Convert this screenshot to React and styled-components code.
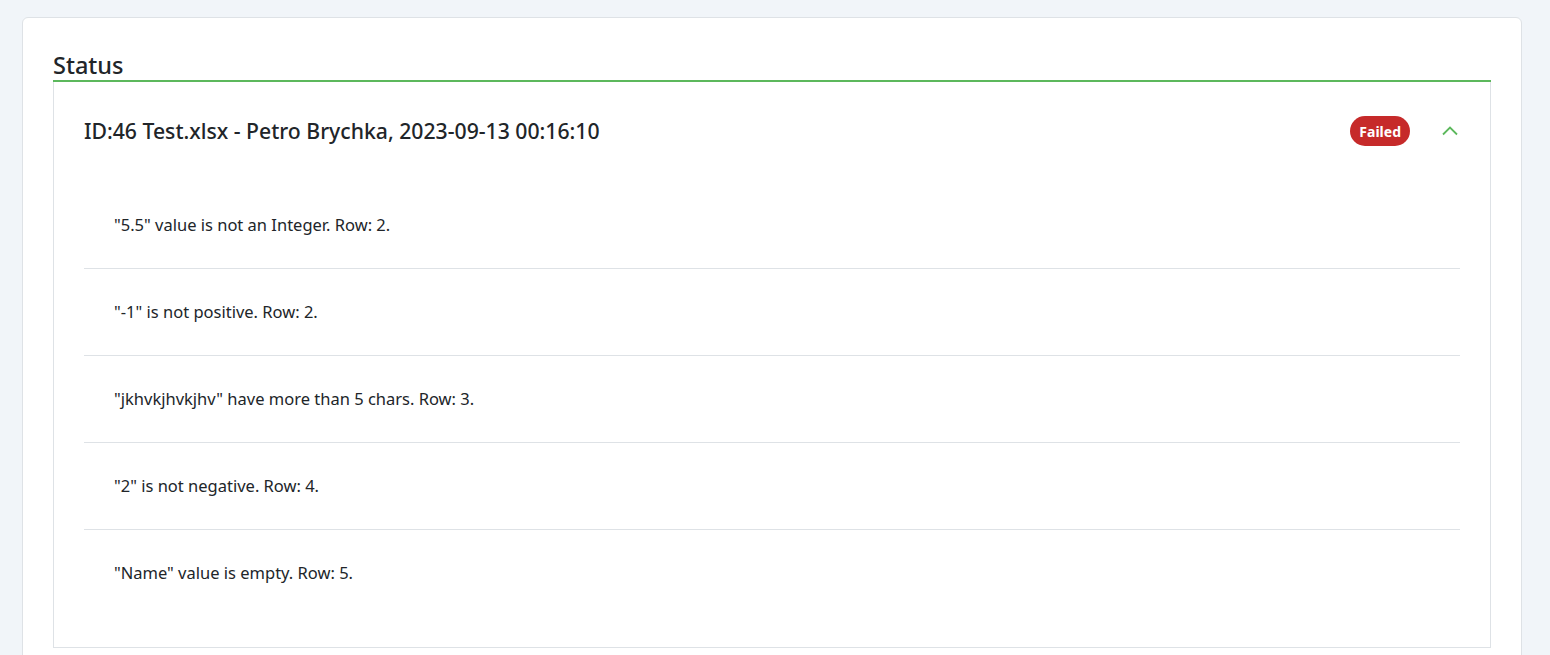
import React from "react";
import styled, { createGlobalStyle } from "styled-components";

const Global = createGlobalStyle`
  html, body { margin: 0; padding: 0; background: #f1f5f9; }
  body { font-family: "Noto Sans", "Open Sans", sans-serif; color: #212529; }
`;

const Page = styled.div`
  padding: 17px 28px 0 22px;
  height: 655px;
  box-sizing: border-box;
  overflow: hidden;
`;

const Card = styled.section`
  background: #fff;
  border: 1px solid #dee2e6;
  border-radius: 6px;
  padding: 33px 30px 30px;
  min-height: 800px;
`;

const Title = styled.h2`
  margin: 0;
  font-size: 23.5px;
  font-weight: 500;
  line-height: 29px;
  padding-bottom: 0;
  border-bottom: 2px solid #5cb85c;
`;

const Accordion = styled.div`
  border: 1px solid #dee2e6;
  border-top: none;
`;

const Header = styled.div`
  display: flex;
  align-items: center;
  padding: 34px 30px 36px;
`;

const HeaderTitle = styled.div`
  flex: 1;
  font-size: 21.2px;
  font-weight: 500;
  line-height: 30px;
`;

const Badge = styled.span`
  display: inline-flex;
  align-items: center;
  justify-content: center;
  height: 30px;
  padding: 0 9px;
  border-radius: 15px;
  background: #c62a2a;
  color: #fff;
  font-size: 14px;
  font-weight: 700;
`;

const Toggle = styled.button`
  border: none;
  background: none;
  padding: 0;
  margin-left: 32px;
  margin-right: 2px;
  display: flex;
  align-items: center;
  cursor: pointer;
`;

const Body = styled.div`
  margin: 0 30px;
  padding-bottom: 31px;
`;

const Item = styled.div`
  padding: 31px 30px;
  font-size: 16.5px;
  line-height: 24px;
  border-bottom: ${(p) => (p.$last ? "none" : "1px solid #dee2e6")};
`;

const errors = [
  '"5.5" value is not an Integer. Row: 2.',
  '"-1" is not positive. Row: 2.',
  '"jkhvkjhvkjhv" have more than 5 chars. Row: 3.',
  '"2" is not negative. Row: 4.',
  '"Name" value is empty. Row: 5.',
];

export default function App() {
  return (
    <>
      <Global />
      <Page>
        <Card>
          <Title>Status</Title>
          <Accordion>
            <Header>
              <HeaderTitle>ID:46 Test.xlsx - Petro Brychka, 2023-09-13 00:16:10</HeaderTitle>
              <Badge>Failed</Badge>
              <Toggle aria-label="collapse">
                <svg width="16" height="10" viewBox="0 0 16 10" fill="none">
                  <path d="M1 8.5 L8 1.5 L15 8.5" stroke="#5cb85c" strokeWidth="1.8" />
                </svg>
              </Toggle>
            </Header>
            <Body>
              {errors.map((e, i) => (
                <Item key={i} $last={i === errors.length - 1}>{e}</Item>
              ))}
            </Body>
          </Accordion>
        </Card>
      </Page>
    </>
  );
}
